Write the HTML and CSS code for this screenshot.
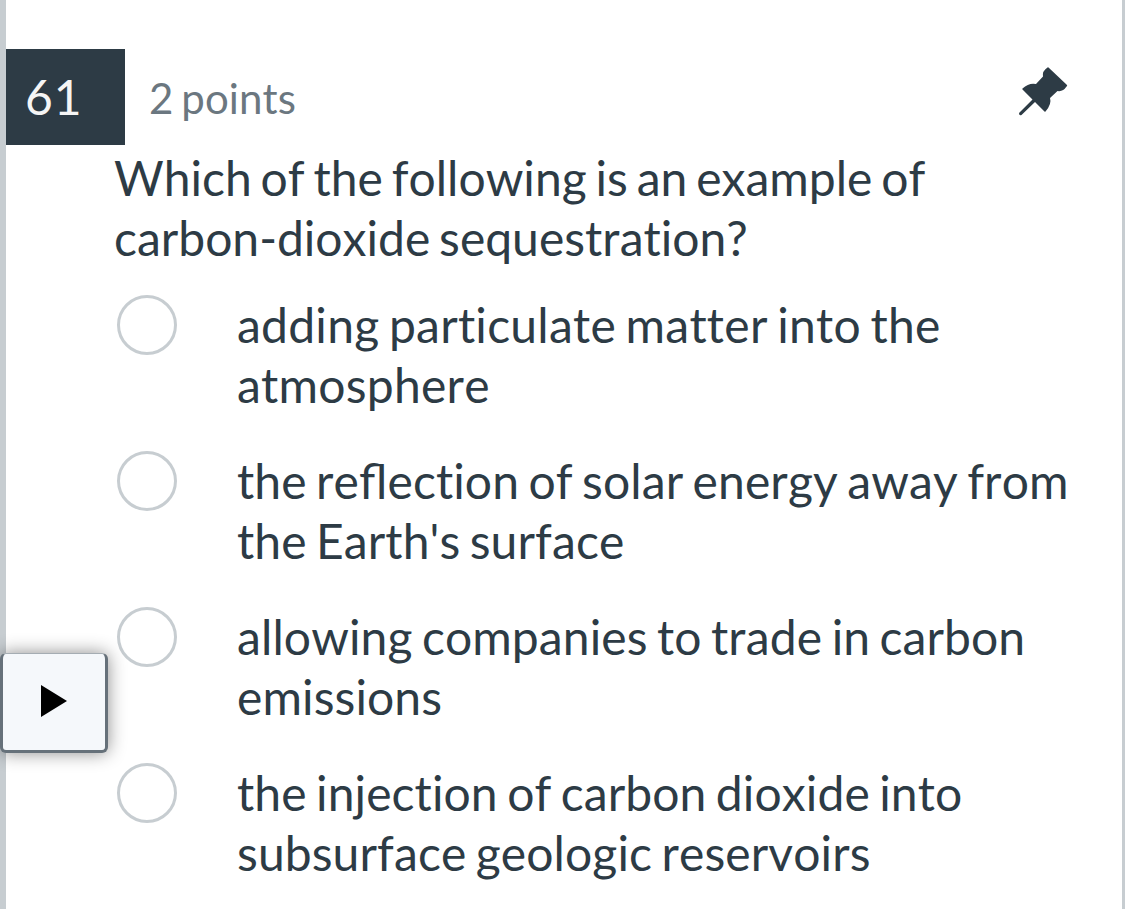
FILE: index.html
```html
<!DOCTYPE html>
<html lang="en">
<head>
  <meta charset="UTF-8">
  <title>Question 61</title>
  <link rel="stylesheet" href="styles.css">
</head>
<body>

  <div class="question">
    <!-- Question header -->
    <div class="header">
      <span class="number">61</span>
      <span class="points">2 points</span>
      <svg class="pin" viewBox="0 0 50 50">
        <path d="M28.500 0.500 Q29 0 29.500 0.500 L48 18 Q48.500 19 47.500 19.500 Q44 25 38.500 24 L31 31 Q33 37 26.500 44.500 Q26 45 25.500 44.500 L16 35 L2.500 48 Q0 49 0 46 L13.500 32.500 L3.500 22.500 Q3 22 3.500 21.500 Q10 15.500 17 17 L24 9.500 Q23 4 28.500 0.500 Z" />
      </svg>
    </div>

    <form class="content">
      <p class="prompt">Which of the following is an example of carbon-dioxide sequestration?</p>
      <label class="answer wide">
        <input type="radio" name="answer">
        <span>adding particulate matter into the atmosphere</span>
      </label>
      <label class="answer">
        <input type="radio" name="answer">
        <span>the re&#xFB02;ection of solar energy away from the Earth's surface</span>
      </label>
      <label class="answer">
        <input type="radio" name="answer">
        <span>allowing companies to trade in carbon emissions</span>
      </label>
      <label class="answer">
        <input type="radio" name="answer">
        <span>the injection of carbon dioxide into subsurface geologic reservoirs</span>
      </label>
    </form>
  </div>

  <!-- Floating drawer button -->
  <button class="toggle" aria-label="Open">
    <svg viewBox="0 0 26 32"><path d="M0 0 L26 16 L0 32 Z" /></svg>
  </button>

</body>
</html>
```

FILE: styles.css
```css
* {
  box-sizing: border-box;
  margin: 0;
  padding: 0;
}

body {
  font-family: Lato, sans-serif;
  font-variant-ligatures: none;
  font-kerning: none;
  word-spacing: -3px;
  background: white;
  color: #2d3b45;
  height: 909px;
  overflow: hidden;
}

.question {
  height: 909px;
  border-left: 6px solid #c7cdd1;
  border-right: 3px solid #c7cdd1;
  padding-top: 49px;
}

.header {
  display: flex;
  align-items: center;
  height: 96px;
  padding-right: 53px;
}

.number {
  width: 119px;
  height: 96px;
  padding-left: 19px;
  background: #2d3b45;
  color: #f5f5f5;
  font-size: 48px;
  line-height: 96px;
  letter-spacing: 0.8px;
}

.points {
  margin-left: 24px;
  padding-top: 1px;
  color: #6b7780;
  font-size: 42px;
  letter-spacing: 0.1px;
}

.pin {
  width: 50px;
  height: 50px;
  margin-left: auto;
  margin-bottom: 10px;
  fill: #2d3b45;
}

.content {
  padding: 3px 40px 0 108px;
  font-size: 48px;
  line-height: 60px;
}

.prompt {
  margin-bottom: 27px;
  word-spacing: -3.4px;
}

.answer {
  display: flex;
  align-items: flex-start;
  margin-bottom: 36px;
  letter-spacing: 0.1px;
}

.answer.wide {
  letter-spacing: 0.25px;
}

.answer input {
  appearance: none;
  flex: none;
  width: 60px;
  height: 60px;
  margin: 0 60px 0 3px;
  border: 3px solid #c7cdd1;
  border-radius: 50%;
}

.toggle {
  position: absolute;
  left: 0;
  top: 653px;
  width: 108px;
  height: 100px;
  display: flex;
  align-items: center;
  padding: 0 0 2px 38px;
  background: #f5f8fb;
  border: 3px solid #66717a;
  border-top: 1px solid #a5adb3;
  border-radius: 6px;
  box-shadow: 0 0 18px rgba(0, 0, 0, 0.45);
}

.toggle svg {
  width: 26px;
  height: 32px;
}
```
